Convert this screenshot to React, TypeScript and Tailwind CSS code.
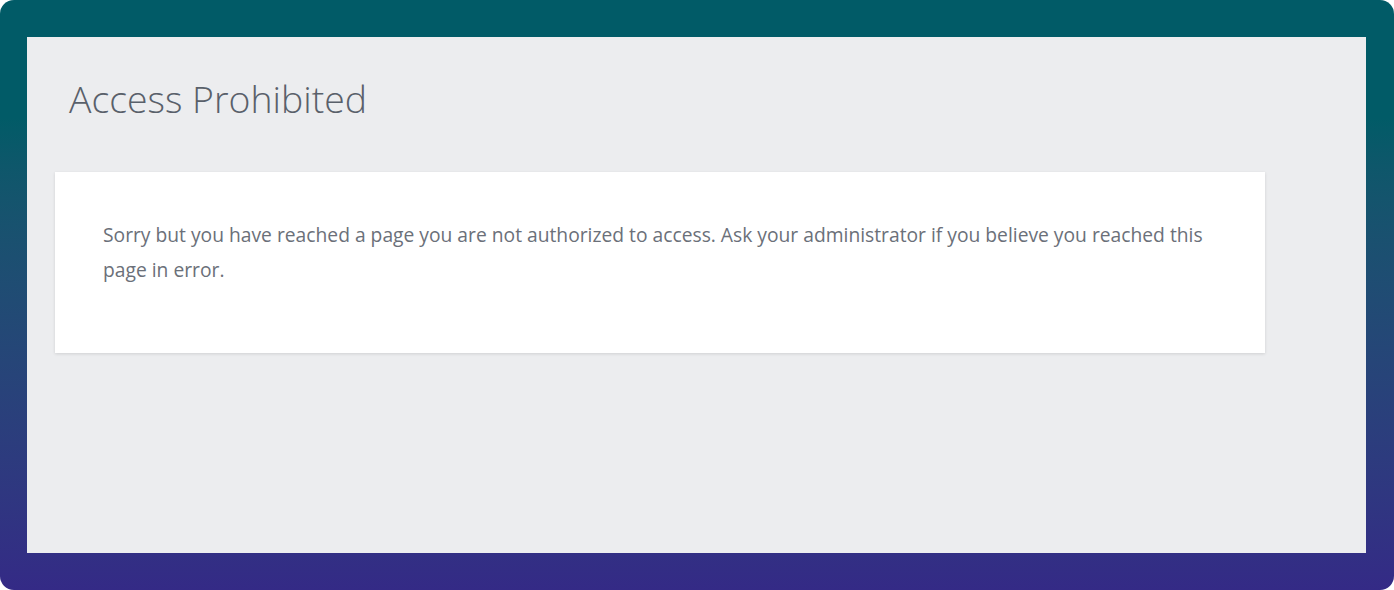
export default function App() {
  return (
    <div className="w-[1394px] h-[590px] bg-white">
      <div className="w-full h-full rounded-[14px] bg-linear-to-b from-[#015b67] from-20% to-[#342a86] pl-[27px] pr-[28px] pt-[37px] pb-[37px]">
        <div
          className="h-full bg-[#ecedef] pl-[28px]"
          style={{ fontFamily: '"Open Sans", "Noto Sans", sans-serif' }}
        >
          <h1 className="pl-[14px] pt-[40px] text-[37.4px] leading-[44px] font-light text-[#59606a]">
            Access Prohibited
          </h1>
          <div className="mt-[51px] w-[1210px] bg-white pl-[48px] pr-[40px] pt-[45px] pb-[66px] shadow-[0_1px_3px_rgba(0,0,0,0.12)]">
            <p className="text-[19.25px] leading-[35px] text-[#6b7079]">
              Sorry but you have reached a page you are not authorized to access. Ask your administrator if you believe you reached this page in error.
            </p>
          </div>
        </div>
      </div>
    </div>
  )
}
